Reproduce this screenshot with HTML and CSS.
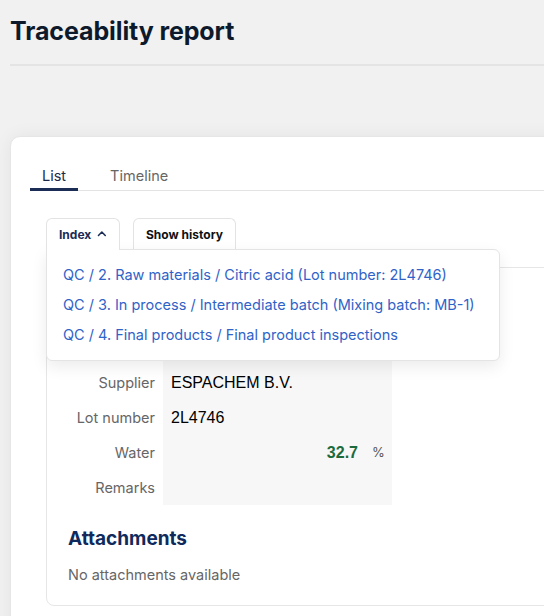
FILE: index.html
```html
<!DOCTYPE html>
<html lang="en">
<head>
    <meta charset="UTF-8">
    <meta name="viewport" content="width=device-width, initial-scale=1.0">
    <title>Traceability report</title>
    <link rel="stylesheet" href="styles.css">
</head>
<body>
    <div class="page-head">
        <h1>Traceability report</h1>
    </div>

    <div class="card">
        <div class="tabs">
            <div class="tab active">List</div>
            <div class="tab">Timeline</div>
        </div>

        <div class="report">
            <div class="toolbar">
                <button class="tool-btn open">Index
                    <svg class="chevron" width="10" height="10" viewBox="0 0 10 10"><path d="M1.5 6.5 L5 3 L8.5 6.5" fill="none" stroke="currentColor" stroke-width="1.6" stroke-linecap="round" stroke-linejoin="round"/></svg>
                </button>
                <button class="tool-btn">Show history</button>

                <div class="index-menu">
                    <a href="#">QC / 2. Raw materials / Citric acid (Lot number: 2L4746)</a>
                    <a href="#">QC / 3. In process / Intermediate batch (Mixing batch: MB-1)</a>
                    <a href="#">QC / 4. Final products / Final product inspections</a>
                </div>
            </div>

            <div class="panel">
                <div class="fields">
                    <div class="label">Material</div>
                    <div class="value">Citric acid</div>
                    <div class="unit"></div>

                    <div class="label">Received</div>
                    <div class="value">12-03-2024</div>
                    <div class="unit"></div>

                    <div class="label">Supplier</div>
                    <div class="value">ESPACHEM B.V.</div>
                    <div class="unit"></div>

                    <div class="label">Lot number</div>
                    <div class="value">2L4746</div>
                    <div class="unit"></div>

                    <div class="label">Water</div>
                    <div class="value number">32.7</div>
                    <div class="unit">%</div>

                    <div class="label">Remarks</div>
                    <div class="value"></div>
                    <div class="unit"></div>
                </div>

                <div class="attachments">
                    <h3>Attachments</h3>
                    <p>No attachments available</p>
                </div>
            </div>
        </div>
    </div>
</body>
</html>
```

FILE: styles.css
```css
* {
    margin: 0;
    padding: 0;
    box-sizing: border-box;
}

body {
    font-family: 'Inter', 'Open Sans', sans-serif;
    background: #f1f1f1;
    color: #333;
    overflow: hidden;
    height: 616px;
}

.page-head {
    margin-left: 10px;
    padding-top: 15px;
    padding-bottom: 17px;
    border-bottom: 2px solid #e4e4e4;
}

h1 {
    font-size: 25px;
    line-height: 32px;
    font-weight: 700;
    color: #0d1a2b;
    letter-spacing: -0.1px;
}

.card {
    margin: 70px -40px 0 10px;
    padding: 29px 0 40px 19px;
    background: #fff;
    border: 1px solid #e6e6e6;
    border-radius: 10px;
    box-shadow: 0 0 18px rgba(0, 0, 0, 0.06);
    min-height: 600px;
}

.tabs {
    display: flex;
    gap: 20px;
    border-bottom: 1px solid #e3e3e3;
}

.tab {
    padding: 0 12px 2px;
    font-size: 14.5px;
    line-height: 20px;
    color: #666;
    margin-bottom: -1px;
    border-bottom: 3px solid transparent;
}

.tab.active {
    color: #1c2a4a;
    border-bottom-color: #1b2c55;
}

.report {
    margin-left: 16px;
}

.toolbar {
    position: relative;
    display: flex;
    gap: 13px;
    margin-top: 27px;
    height: 31px;
}

.tool-btn {
    display: flex;
    align-items: center;
    gap: 6px;
    padding: 0 12px;
    height: 31px;
    font-family: 'Inter', sans-serif;
    font-size: 12px;
    font-weight: 700;
    color: #111;
    background: #fff;
    border: 1px solid #e3e3e3;
    border-bottom: none;
    border-radius: 6px 6px 0 0;
}

.tool-btn.open {
    position: relative;
    z-index: 3;
    width: 74px;
    height: 32px;
    color: #1b2c55;
}

.chevron {
    margin-top: -1px;
}

.index-menu {
    position: absolute;
    z-index: 2;
    top: 31px;
    left: 0;
    width: 454px;
    padding: 10px 0;
    background: #fff;
    border: 1px solid #e4e4e4;
    border-radius: 0 6px 6px 6px;
    box-shadow: 0 6px 16px rgba(0, 0, 0, 0.08);
}

.index-menu a {
    display: block;
    padding: 0 16px;
    font-size: 14.5px;
    line-height: 30px;
    color: #2f63c8;
    text-decoration: none;
    white-space: nowrap;
}

.panel {
    margin-top: 18px;
    padding: 27px 0 20px;
    border: 1px solid #e6e6e6;
    border-radius: 8px;
}

.fields {
    display: grid;
    grid-template-columns: 116px 199px 30px;
}

.fields > div {
    height: 35px;
    line-height: 35px;
}

.label {
    padding-right: 8px;
    text-align: right;
    font-size: 14.5px;
    color: #666;
}

.value,
.unit {
    background: #f7f7f7;
}

.value {
    padding-left: 8px;
    font-family: 'Liberation Sans', Arial, sans-serif;
    font-size: 16px;
    color: #000;
}

.value.number {
    text-align: right;
    padding-right: 4px;
    font-weight: 700;
    font-size: 16px;
    color: #1b6b3c;
}

.unit {
    padding-left: 10px;
    font-size: 13px;
    color: #555;
}

.attachments {
    padding-left: 21px;
    margin-top: 22px;
}

.attachments h3 {
    font-size: 19px;
    line-height: 24px;
    font-weight: 700;
    color: #0f2a5c;
    margin-bottom: 14px;
}

.attachments p {
    font-size: 14.5px;
    line-height: 20px;
    color: #666;
}
```
